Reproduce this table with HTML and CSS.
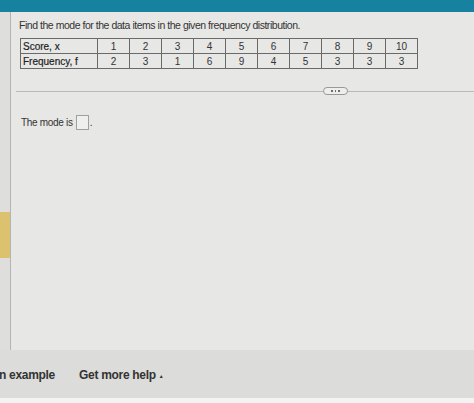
FILE: index.html
```html
<!DOCTYPE html>
<html>
<head>
<meta charset="utf-8">
<link rel="stylesheet" href="styles.css">
</head>
<body>
<div class="topbar"></div>
<div class="main">
  <div class="rail"><div class="marker"></div></div>
  <div class="content">
    <p class="question">Find the mode for the data items in the given frequency distribution.</p>
    <table class="freq">
      <tr><th>Score, x</th><td>1</td><td>2</td><td>3</td><td>4</td><td>5</td><td>6</td><td>7</td><td>8</td><td>9</td><td>10</td></tr>
      <tr><th>Frequency, f</th><td>2</td><td>3</td><td>1</td><td>6</td><td>9</td><td>4</td><td>5</td><td>3</td><td>3</td><td>3</td></tr>
    </table>
    <div class="divider"><span class="pill"><i></i><i></i><i></i></span></div>
    <p class="answer">The mode is <span class="box"></span>.</p>
  </div>
</div>
<div class="footer">
  <span class="link cut">n example</span>
  <span class="link">Get more help <span class="caret">&#9650;</span></span>
</div>
<div class="bottom"></div>
</body>
</html>
```
FILE: styles.css
```css
html, body {
  margin: 0;
  padding: 0;
}
body {
  width: 474px;
  height: 403px;
  overflow: hidden;
  background: #e7e7e5;
  font-family: "Liberation Sans", Arial, sans-serif;
  color: #2a2a2a;
}
.topbar {
  height: 12px;
  background: #17829f;
}
.main {
  display: flex;
  height: 338px;
}
.rail {
  width: 10px;
  background: #dededc;
  border-right: 1px solid #b4b4b2;
  padding-top: 200px;
  box-sizing: content-box;
}
.marker {
  height: 46px;
  background: #dcc26e;
}
.content {
  flex: 1;
  padding: 6px 0 0 8px;
}
.question {
  margin: 0;
  font-size: 10.5px;
  line-height: 14px;
  letter-spacing: -0.47px;
  color: #333;
}
.freq {
  margin: 6px 0 0 1px;
  border-collapse: collapse;
  border: 1.5px solid #4a4a4a;
  font-size: 10px;
  color: #333;
}
.freq th, .freq td {
  border: 1px solid #6a6a6a;
  height: 14px;
  padding: 0;
  line-height: 13px;
}
.freq th {
  width: 74px;
  text-align: left;
  padding-left: 2px;
  font-weight: normal;
  color: #1e1e1e;
  -webkit-text-stroke: 0.2px #1e1e1e;
}
.freq td {
  width: 31px;
  text-align: center;
}
.divider {
  position: relative;
  margin: 22px 0 0 -3px;
  border-top: 1px solid #b9b9b7;
  height: 0;
}
.pill {
  position: absolute;
  left: 307px;
  top: -5px;
  width: 23px;
  height: 6px;
  border: 1px solid #999;
  border-radius: 4px;
  background: #eeeeec;
  display: flex;
  justify-content: center;
  align-items: center;
  gap: 2px;
}
.pill i {
  width: 1.5px;
  height: 1.5px;
  background: #555;
  border-radius: 50%;
}
.answer {
  margin: 23px 0 0 2px;
  font-size: 10px;
  letter-spacing: -0.3px;
  color: #333;
  display: flex;
  align-items: center;
}
.box {
  display: inline-block;
  width: 11px;
  height: 13px;
  border: 1px solid #a0a0a0;
  background: #efefed;
  margin: 0 1px 0 3px;
}
.footer {
  height: 48px;
  background: #dcdcda;
  display: flex;
  align-items: center;
  gap: 24px;
  font-size: 12px;
  font-weight: bold;
  letter-spacing: -0.3px;
  color: #333;
  padding-top: 2px;
  box-sizing: border-box;
}
.link.cut {
  margin-left: -1px;
}
.caret {
  font-size: 5px;
  vertical-align: middle;
}
.bottom {
  height: 5px;
  background: #f3f3f1;
}
```
